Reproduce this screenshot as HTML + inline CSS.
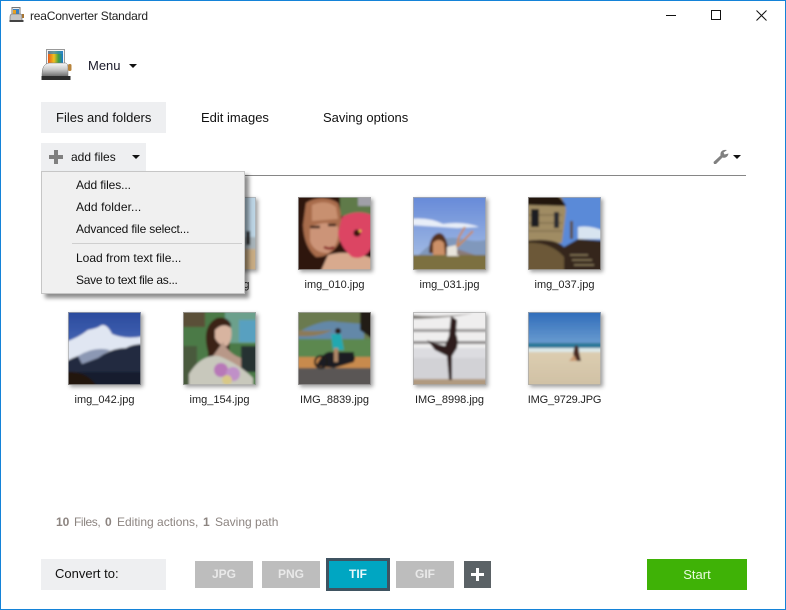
<!DOCTYPE html>
<html><head><meta charset="utf-8"><title>reaConverter Standard</title>
<style>
html,body{margin:0;padding:0;background:#fff}
body{position:relative;width:786px;height:610px;overflow:hidden;font-family:"Liberation Sans",sans-serif;color:#111;font-size:12px}
.a{position:absolute}
.t{position:absolute;white-space:nowrap;line-height:16px}
.thumb{position:absolute;width:73px;height:73px;box-shadow:2px 2px 4px rgba(0,0,0,.38);overflow:hidden}
.thumb svg{display:block;width:73px;height:73px}
.thumb:after{content:"";position:absolute;left:0;top:0;width:71px;height:71px;border:1px solid rgba(170,170,170,.7)}
.lbl{position:absolute;width:115px;text-align:center;font-size:11px;line-height:14px;color:#222}
.fmt{position:absolute;top:561px;width:58px;height:27px;background:#bdbdbd;color:#e9e9e9;font-weight:bold;font-size:12px;line-height:27px;text-align:center}
.mi{position:absolute;left:76px;font-size:12px;line-height:16px;color:#111;white-space:nowrap}
.tab{position:absolute;top:110px;font-size:13px;line-height:16px;white-space:nowrap;color:#111}
.tri{position:absolute;width:0;height:0;border-left:4px solid transparent;border-right:4px solid transparent;border-top:4px solid #111}
.st{position:absolute;top:514px;line-height:16px;white-space:nowrap;color:#8c8480;font-size:12px}
</style></head><body>
<svg width="0" height="0" style="position:absolute"><defs><filter id="b" x="-5%" y="-5%" width="110%" height="110%"><feGaussianBlur stdDeviation="1.1"/></filter></defs></svg>

<!-- window border -->
<div class="a" style="left:0;top:0;width:784px;height:608px;border:1px solid #1483d8"></div>

<!-- title bar -->
<svg class="a" style="left:9px;top:7px" width="16" height="16" viewBox="0 0 16 16">
<rect x="3" y="0.5" width="8" height="8" fill="#eee" stroke="#777"/><rect x="4" y="2" width="6" height="5" fill="#3a80c0"/><rect x="4" y="3" width="3" height="4" fill="#e8a020"/>
<path d="M1 10 Q1 7 3 7 H11 Q13 7 13 9 V14 H1Z" fill="#c4c4c4" stroke="#666" stroke-width=".6"/><rect x="0.5" y="13" width="14" height="2" fill="#444"/><rect x="13" y="7" width="2" height="4" fill="#a67432"/>
</svg>
<div class="t" style="left:30px;top:8px;font-size:12px;color:#222;letter-spacing:-.2px">reaConverter Standard</div>
<div class="a" style="left:666px;top:15px;width:10px;height:1px;background:#111"></div>
<div class="a" style="left:711px;top:10px;width:8px;height:8px;border:1px solid #111"></div>
<svg class="a" style="left:756px;top:10px" width="11" height="11" viewBox="0 0 11 11"><path d="M.5 .5L10.5 10.5M10.5 .5L.5 10.5" stroke="#111" fill="none"/></svg>

<!-- menu -->
<svg class="a" style="left:41px;top:49px" width="32" height="32" viewBox="0 0 32 32">
<defs><linearGradient id="pg" x1="0" y1="0" x2="0" y2="1"><stop offset="0" stop-color="#f8f8f8"/><stop offset=".5" stop-color="#c8c8c8"/><stop offset="1" stop-color="#707070"/></linearGradient>
<linearGradient id="rb" x1="0" y1="0" x2="1" y2="0"><stop offset="0" stop-color="#e85818"/><stop offset=".4" stop-color="#f0c020"/><stop offset=".7" stop-color="#40a040"/><stop offset="1" stop-color="#1878d0"/></linearGradient></defs>
<rect x="5.5" y="0.5" width="18" height="16" fill="#f4f4f4" stroke="#999"/>
<rect x="7" y="2" width="15" height="13" fill="url(#rb)"/><rect x="7" y="2" width="15" height="3" fill="#3088c8" opacity=".7"/>
<path d="M1 25 Q1 15 8 14 H25 Q27 15 27 18 V27 H1Z" fill="url(#pg)" stroke="#777" stroke-width=".5"/>
<rect x="27" y="15" width="3.5" height="7" rx="1.5" fill="#b8843c"/>
<rect x="0.5" y="27" width="29" height="4" fill="#2c2c2c"/>
</svg>
<div class="t" style="left:88px;top:58px;font-size:13px;color:#1a1a2a">Menu</div>
<div class="tri" style="left:129px;top:64px"></div>

<!-- tabs -->
<div class="a" style="left:41px;top:102px;width:125px;height:31px;background:#eeeff1"></div>
<div class="tab" style="left:56px">Files and folders</div>
<div class="tab" style="left:201px">Edit images</div>
<div class="tab" style="left:323px">Saving options</div>

<!-- toolbar -->
<div class="a" style="left:41px;top:143px;width:105px;height:28px;background:#eeeff1"></div>
<svg class="a" style="left:49px;top:150px" width="14" height="14" viewBox="0 0 14 14"><path d="M5 0H9V5H14V9H9V14H5V9H0V5H5Z" fill="#808080"/></svg>
<div class="t" style="left:71px;top:149px;font-size:12px">add files</div>
<div class="tri" style="left:132px;top:155px"></div>
<div class="a" style="left:41px;top:175px;width:705px;height:1px;background:#868686"></div>
<svg class="a" style="left:713px;top:149px" width="16" height="16" viewBox="0 0 16 16"><path d="M1 15 L0.5 13 L7.5 6.5 Q7 3 9.5 1.5 Q11.5 .5 14 1 L10.5 3.5 L11.5 5.5 L15.5 4.5 Q15 7.5 12.5 8.5 Q11 9 9.5 8.5 L3 15 Z" fill="#808080"/></svg>
<div class="tri" style="left:733px;top:155px"></div>

<!-- thumbnails row 1 -->
<div class="thumb" style="left:183px;top:197px"><svg viewBox="0 0 73 73"><rect width="73" height="73" fill="#bcd4e4"/><g filter="url(#b)"><rect x="-3" y="-3" width="79" height="79" fill="#bcd4e4"/><rect x="-3" y="40" width="79" height="12" fill="#a8b4ba"/><rect x="-3" y="52" width="79" height="24" fill="#c8ac84"/><rect x="63" y="34" width="4" height="14" fill="#2a2a2a"/></g></svg></div>
<div class="lbl" style="left:162px;top:278px">img_005.jpg</div>

<div class="thumb" style="left:298px;top:197px"><svg viewBox="0 0 73 73"><g filter="url(#b)"><rect x="-3" y="-3" width="79" height="79" fill="#2e140c"/>
<rect x="42" y="-3" width="34" height="22" fill="#5f7a4a"/><rect x="60" y="-3" width="16" height="12" fill="#a0a0a8"/>
<path d="M8 6 Q24 -4 40 6 Q46 22 42 44 Q34 60 18 60 Q6 50 5 28Z" fill="#a86c4c"/>
<path d="M14 8 Q28 2 38 10 L40 22 L14 24Z" fill="#c89070"/>
<path d="M12 30 Q30 22 40 30 Q42 48 30 56 Q16 56 12 44Z" fill="#cc9478"/>
<path d="M12 30h10M30 28h8" stroke="#3a2015" stroke-width="2.5"/><path d="M26 50q6 3 10 0" stroke="#8a2c2c" stroke-width="2.5" fill="none"/>
<path d="M30 58 Q50 52 76 62 V76 H22Z" fill="#d8aa8e"/>
<path d="M44 20 Q58 12 74 18 L74 50 Q66 64 54 60 Q42 50 40 36Z" fill="#dc4464"/><circle cx="59" cy="36" r="3.5" fill="#3a1810"/><circle cx="62" cy="34" r="1.4" fill="#e8c040"/>
</g></svg></div>
<div class="lbl" style="left:277px;top:278px">img_010.jpg</div>

<div class="thumb" style="left:413px;top:197px"><svg viewBox="0 0 73 73"><defs><linearGradient id="s1" x1="0" y1="0" x2="0" y2="1"><stop offset="0" stop-color="#6488d8"/><stop offset="1" stop-color="#a4bce4"/></linearGradient></defs><g filter="url(#b)"><rect x="-3" y="-3" width="79" height="66" fill="url(#s1)"/>
<path d="M-3 22 Q16 20 30 27 Q50 24 66 30 L44 31 L-3 28Z" fill="#e8eef8"/><path d="M4 60 Q24 36 50 42 Q64 46 76 42 V60Z" fill="#8098bc"/>
<rect x="-3" y="58" width="79" height="18" fill="#7c7040"/>
<path d="M16 56 Q16 38 26 36 Q34 36 36 58Z" fill="#54301c"/><path d="M20 46 Q26 40 31 46 L32 58 H20Z" fill="#cc9068"/><path d="M34 50 L43 48 L46 59 H34Z" fill="#e8e4dc"/>
<path d="M44 50 L46 40 L52 30 M44 50 L56 38 L60 34" stroke="#c88a58" stroke-width="2" fill="none"/><path d="M44 52 L62 58 H44Z" fill="#8a7a78"/></g></svg></div>
<div class="lbl" style="left:392px;top:278px">img_031.jpg</div>

<div class="thumb" style="left:528px;top:197px"><svg viewBox="0 0 73 73"><g filter="url(#b)"><rect x="-3" y="-3" width="79" height="79" fill="#5a8ad8"/><path d="M50 30 Q62 28 76 34 V42 H50Z" fill="#d8e4f0"/>
<path d="M-3 -3 H32 Q38 8 38 14 L34 46 H-3Z" fill="#a08c64"/><path d="M-3 -3 H28 Q36 4 38 9 L0 8 H-3Z" fill="#20140c"/>
<path d="M0 18H34M0 26H34M0 34H34" stroke="#7c6c4c" stroke-width="1.2"/>
<rect x="3" y="12" width="8" height="18" fill="#1c1c20"/><rect x="26" y="15" width="5" height="16" fill="#2c2c30"/>
<path d="M-3 44 Q26 40 36 50 L50 42 L76 44 V76 H-3Z" fill="#34281a"/><path d="M-3 46 Q22 44 36 60 V76 H-3Z" fill="#6c5838"/>
<path d="M42 58H60M44 63H64M46 68H66" stroke="#8a7a5c" stroke-width="1.5"/><rect x="42" y="24" width="3" height="18" fill="#5c5040"/></g></svg></div>
<div class="lbl" style="left:507px;top:278px">img_037.jpg</div>

<!-- thumbnails row 2 -->
<div class="thumb" style="left:68px;top:312px"><svg viewBox="0 0 73 73"><defs><linearGradient id="s2" x1="0" y1="0" x2="0" y2="1"><stop offset="0" stop-color="#28489c"/><stop offset="1" stop-color="#5070bc"/></linearGradient></defs><g filter="url(#b)"><rect x="-3" y="-3" width="79" height="50" fill="url(#s2)"/>
<path d="M-3 30 Q10 26 20 18 Q30 16 32 14 Q38 10 44 22 Q58 28 76 24 V40 L40 46 L-3 52Z" fill="#e0e6f2"/>
<path d="M-3 50 Q18 38 36 42 Q46 36 58 36 Q64 32 76 32 V76 H-3Z" fill="#222a40"/>
<path d="M10 44 Q26 34 42 38 L30 46 L14 52Z" fill="#8c98b4"/><path d="M-3 60 H76 V76 H-3Z" fill="#181e2e"/><path d="M-3 60 Q20 58 30 76 H-3Z" fill="#20180e"/></g></svg></div>
<div class="lbl" style="left:47px;top:393px">img_042.jpg</div>

<div class="thumb" style="left:183px;top:312px"><svg viewBox="0 0 73 73"><g filter="url(#b)"><rect x="-3" y="-3" width="79" height="79" fill="#4c7a46"/><rect x="42" y="-3" width="34" height="34" fill="#6ca08c"/><rect x="56" y="8" width="20" height="22" fill="#58a0c0"/>
<rect x="-3" y="-3" width="25" height="18" fill="#5a5038"/><rect x="-3" y="34" width="17" height="42" fill="#4a5a3c"/><rect x="58" y="34" width="18" height="26" fill="#283030"/>
<path d="M25 40 Q18 14 34 6 Q44 4 48 12 L46 40 Q34 50 25 48Z" fill="#3a2218"/><path d="M32 18 Q40 10 48 16 Q50 28 44 34 Q36 34 32 26Z" fill="#d8b4a0"/><path d="M40 30 Q46 42 58 46 L58 64 H28 L30 44Z" fill="#b89888"/>
<path d="M6 62 Q18 42 36 44 Q56 52 70 66 L70 76 H6Z" fill="#c8c8bc"/><circle cx="38" cy="58" r="7" fill="#b878b8"/><circle cx="50" cy="62" r="7" fill="#c090c8"/><circle cx="44" cy="68" r="5" fill="#d8c888"/></g></svg></div>
<div class="lbl" style="left:162px;top:393px">img_154.jpg</div>

<div class="thumb" style="left:298px;top:312px"><svg viewBox="0 0 73 73"><g filter="url(#b)"><rect x="-3" y="-3" width="79" height="79" fill="#6a7a50"/><path d="M-3 22 Q24 6 40 10 L66 12 V28 H-3Z" fill="#6488a8"/><path d="M-3 18 Q14 20 34 18 Q20 26 -3 24Z" fill="#8c7a58"/><rect x="-3" y="27" width="79" height="20" fill="#5c8850"/>
<path d="M62 -3H76V28L62 18Z" fill="#221c18"/><rect x="-3" y="45" width="79" height="13" fill="#c88a4e"/><rect x="-3" y="56" width="79" height="20" fill="#5a5654"/>
<path d="M33 22 L43 22 L46 38 H35Z" fill="#20a8b0"/><circle cx="40" cy="19" r="3" fill="#2c1c14"/><path d="M18 54 Q26 38 34 40 L56 40 L56 50 L36 56Z" fill="#1c1c20"/><circle cx="23" cy="50" r="6" fill="none" stroke="#201c1c" stroke-width="2"/><circle cx="52" cy="46" r="5" fill="#1c1c20"/><rect x="36" y="36" width="4" height="14" fill="#b08868"/></g></svg></div>
<div class="lbl" style="left:277px;top:393px">IMG_8839.jpg</div>

<div class="thumb" style="left:413px;top:312px"><svg viewBox="0 0 73 73"><g filter="url(#b)"><rect x="-3" y="-3" width="79" height="79" fill="#d2d2d6"/><rect x="-3" y="-3" width="79" height="39" fill="#efeeee"/><path d="M-3 3 Q30 6 60 1 Q40 6 -3 7Z" fill="#787470"/><path d="M-3 17 H76 V20 H-3Z" fill="#9a9898"/><path d="M-3 29 H76 V32 H-3Z" fill="#8a8888"/><rect x="-3" y="36" width="79" height="10" fill="#dcdce0"/>
<rect x="-3" y="67" width="79" height="9" fill="#b09a80"/>
<path d="M38 4 L44 8 L43 22 Q46 28 44 36 L39 44 L39 68 L36 68 L34 44 L22 38 L14 28 L24 32 L32 34 L36 24Z" fill="#2e1e1a"/></g></svg></div>
<div class="lbl" style="left:392px;top:393px">IMG_8998.jpg</div>

<div class="thumb" style="left:528px;top:312px"><svg viewBox="0 0 73 73"><defs><linearGradient id="s3" x1="0" y1="0" x2="0" y2="1"><stop offset="0" stop-color="#2a68b8"/><stop offset="1" stop-color="#6a9cd0"/></linearGradient><linearGradient id="sd" x1="0" y1="0" x2="0" y2="1"><stop offset="0" stop-color="#dccdb0"/><stop offset="1" stop-color="#cfc0a4"/></linearGradient></defs><g filter="url(#b)"><rect x="-3" y="-3" width="79" height="35" fill="url(#s3)"/><rect x="-3" y="31" width="79" height="5" fill="#2c7898"/><rect x="-3" y="36" width="79" height="4" fill="#dce8e8"/><rect x="-3" y="40" width="79" height="36" fill="url(#sd)"/>
<path d="M46 48 Q44 38 48 33 Q51 34 51 40 L53 49 L44 49Z" fill="#4a2c20"/><path d="M41 49 L46 43 L49 49Z" fill="#c89870"/></g></svg></div>
<div class="lbl" style="left:507px;top:393px;letter-spacing:-.2px">IMG_9729.JPG</div>

<!-- dropdown -->
<div class="a" style="left:41px;top:171px;width:202px;height:121px;background:#f0f0f0;border:1px solid #c6c6c6;box-shadow:4px 4px 4px rgba(0,0,0,.45)"></div>
<div class="mi" style="top:177px;letter-spacing:-.1px">Add files...</div>
<div class="mi" style="top:199px;letter-spacing:.1px">Add folder...</div>
<div class="mi" style="top:221px;letter-spacing:-.15px">Advanced file select...</div>
<div class="a" style="left:72px;top:243px;width:170px;height:1px;background:#cfcfcf"></div>
<div class="mi" style="top:250px">Load from text file...</div>
<div class="mi" style="top:272px;letter-spacing:-.28px">Save to text file as...</div>

<!-- status -->
<div class="st" style="left:56px"><b>10</b></div>
<div class="st" style="left:74px;letter-spacing:-.4px">Files,</div>
<div class="st" style="left:105px"><b>0</b></div>
<div class="st" style="left:117px">Editing actions,</div>
<div class="st" style="left:203px"><b>1</b></div>
<div class="st" style="left:215px">Saving path</div>

<!-- bottom -->
<div class="a" style="left:41px;top:559px;width:125px;height:31px;background:#eeeff1"></div>
<div class="t" style="left:55px;top:566px;font-size:13px">Convert to:</div>
<div class="fmt" style="left:195px">JPG</div>
<div class="fmt" style="left:262px">PNG</div>
<div class="a" style="left:326px;top:558px;width:58px;height:27px;border:3px solid #3f5361;background:#00a6c2;color:#e8f8fb;font-weight:bold;font-size:12px;line-height:27px;text-align:center">TIF</div>
<div class="fmt" style="left:396px">GIF</div>
<div class="a" style="left:464px;top:561px;width:27px;height:27px;background:#5b6266"></div>
<svg class="a" style="left:471px;top:568px" width="13" height="13" viewBox="0 0 13 13"><path d="M5 0H8V5H13V8H8V13H5V8H0V5H5Z" fill="#fff"/></svg>
<div class="a" style="left:647px;top:559px;width:100px;height:31px;background:#3fb206;color:#eafbe0;font-size:13px;line-height:31px;text-align:center">Start</div>
</body></html>
